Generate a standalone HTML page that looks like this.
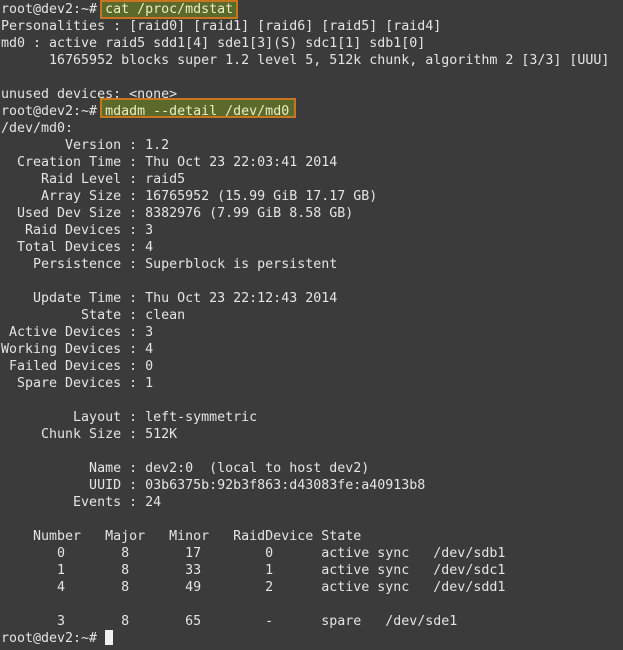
<!DOCTYPE html>
<html><head><meta charset="utf-8"><style>
html,body{margin:0;padding:0;background:#3b3b3b;width:623px;height:650px;overflow:hidden}
.box{position:absolute;background:#5b6a2b;border:2px solid #c7761f;box-sizing:border-box}
pre{position:absolute;left:1px;top:1px;margin:0;font-family:"DejaVu Sans Mono","Liberation Mono",monospace;font-size:13.3px;line-height:17px;color:#e4e4e4}
.h{color:#ecebc0}
.cur{display:inline-block;width:8px;height:15px;background:#f0f0f0;vertical-align:-3px}
</style></head><body>
<div class="box" style="left:100px;top:0;width:138px;height:19px"></div>
<div class="box" style="left:100px;top:98px;width:196px;height:20px"></div>
<pre>root@dev2:~# <span class="h">cat /proc/mdstat</span>
Personalities : [raid0] [raid1] [raid6] [raid5] [raid4]
md0 : active raid5 sdd1[4] sde1[3](S) sdc1[1] sdb1[0]
      16765952 blocks super 1.2 level 5, 512k chunk, algorithm 2 [3/3] [UUU]

unused devices: &lt;none&gt;
root@dev2:~# <span class="h">mdadm --detail /dev/md0</span>
/dev/md0:
        Version : 1.2
  Creation Time : Thu Oct 23 22:03:41 2014
     Raid Level : raid5
     Array Size : 16765952 (15.99 GiB 17.17 GB)
  Used Dev Size : 8382976 (7.99 GiB 8.58 GB)
   Raid Devices : 3
  Total Devices : 4
    Persistence : Superblock is persistent

    Update Time : Thu Oct 23 22:12:43 2014
          State : clean
 Active Devices : 3
Working Devices : 4
 Failed Devices : 0
  Spare Devices : 1

         Layout : left-symmetric
     Chunk Size : 512K

           Name : dev2:0  (local to host dev2)
           UUID : 03b6375b:92b3f863:d43083fe:a40913b8
         Events : 24

    Number   Major   Minor   RaidDevice State
       0       8       17        0      active sync   /dev/sdb1
       1       8       33        1      active sync   /dev/sdc1
       4       8       49        2      active sync   /dev/sdd1

       3       8       65        -      spare   /dev/sde1
root@dev2:~# <span class="cur"></span></pre>
</body></html>
